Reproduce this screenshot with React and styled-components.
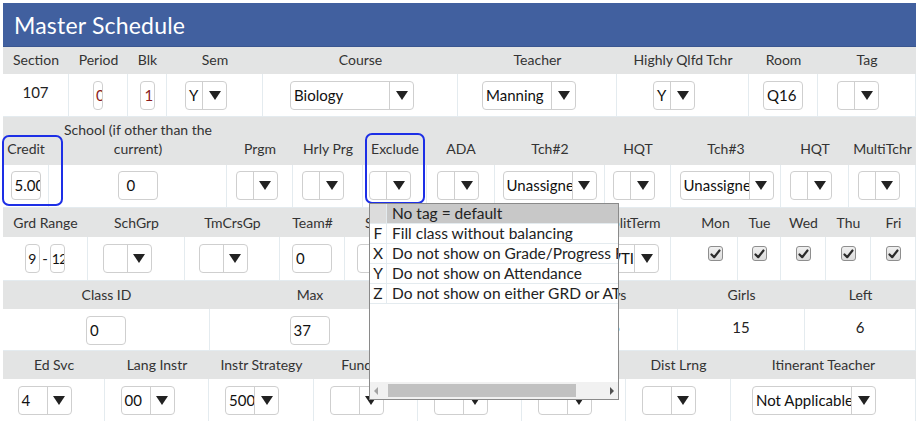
import React from 'react';
import styled, { createGlobalStyle } from 'styled-components';

const GlobalStyle = createGlobalStyle`
  body {
    margin: 0;
    background: #fff;
    font-family: Lato, "Noto Sans", sans-serif;
    color: #222;
  }
`;

const Page = styled.div`
  position: relative;
  width: 918px;
  height: 421px;
  overflow: hidden;
  box-sizing: border-box;
  padding: 3px 2px 0 3px;
`;

const Header = styled.div`
  height: 44px;
  background: #41609f;
  color: #fff;
  font-size: 23px;
  letter-spacing: 0.2px;
  line-height: 44px;
  padding-left: 11px;
  box-shadow: inset 0 -1px 0 #3a5690;
`;

const Block = styled.div`
  display: grid;
  grid-template-columns: ${p => p.cols};
  grid-template-rows: ${p => p.labelH}px ${p => p.valueH}px;
`;

const Label = styled.div`
  background: #e3e4e4;
  color: #333;
  font-size: 14px;
  line-height: 19px;
  text-align: center;
  white-space: nowrap;
  display: flex;
  align-items: flex-end;
  justify-content: center;
  padding-bottom: ${p => p.pb ?? 5}px;
  padding-left: ${p => p.pl ?? 0}px;
  padding-right: ${p => p.pr ?? 0}px;
  box-sizing: border-box;
`;

const Cell = styled.div`
  background: #fff;
  border-right: 1px solid #e4ebef;
  border-bottom: 1px solid #e4ebef;
  display: flex;
  justify-content: center;
  align-items: flex-start;
  gap: 3px;
  padding-top: ${p => p.pt ?? 7}px;
  padding-right: ${p => p.pr ?? 0}px;
  padding-left: ${p => p.pl ?? 0}px;
  box-sizing: border-box;
  &:first-child { border-left: 1px solid #e4ebef; }
`;

const Plain = styled.div`
  font-size: 15px;
  color: #222;
  padding-top: 2px;
`;

const Input = styled.div`
  width: ${p => p.w}px;
  height: 29px;
  box-sizing: border-box;
  border: 1px solid #cfcfcf;
  border-radius: 4px;
  background: #fff;
  font-size: ${p => (p.tight ? 14 : 15)}px;
  letter-spacing: ${p => (p.tight ? '-0.6px' : 'normal')};
  line-height: 27px;
  padding-left: ${p => p.pl ?? 3}px;
  color: ${p => (p.red ? '#8a1c1c' : '#111')};
  overflow: hidden;
  white-space: nowrap;
`;

const Dash = styled.span`
  font-size: 15px;
  line-height: 29px;
  margin: 0 -1px;
`;

const SelectBox = styled.div`
  display: flex;
  height: 29px;
  box-sizing: border-box;
  border: 1px solid #cfcfcf;
  border-radius: 4px;
  background: #fff;
`;

const SelectValue = styled.div`
  width: ${p => p.w}px;
  font-size: 15px;
  line-height: 27px;
  padding-left: 3px;
  box-sizing: border-box;
  overflow: hidden;
  white-space: nowrap;
  color: #111;
  display: flex;
  justify-content: ${p => (p.end ? 'flex-end' : 'flex-start')};
  border-right: 1px solid #cfcfcf;
`;

const Arrow = styled.div`
  width: 23px;
  display: flex;
  align-items: center;
  justify-content: center;
  &::after {
    content: '';
    border-left: 6px solid transparent;
    border-right: 6px solid transparent;
    border-top: 9px solid #222;
  }
`;

const Check = styled.div`
  width: 15px;
  height: 15px;
  box-sizing: border-box;
  border: 1px solid #8e8e8e;
  border-radius: 3px;
  background: linear-gradient(#f0f0f0, #dcdcdc);
  display: flex;
  align-items: center;
  justify-content: center;
`;

const Outline = styled.div`
  position: absolute;
  left: ${p => p.x}px;
  top: ${p => p.y}px;
  width: ${p => p.w}px;
  height: ${p => p.h}px;
  box-sizing: border-box;
  border: 2px solid #1d2fe6;
  border-radius: 7px;
  pointer-events: none;
`;

const Dropdown = styled.div`
  position: absolute;
  left: 369px;
  top: 203px;
  width: 250px;
  height: 197px;
  box-sizing: border-box;
  border: 1px solid #8a8a8a;
  background: #fff;
  display: flex;
  flex-direction: column;
`;

const Option = styled.div`
  display: grid;
  grid-template-columns: 17px 1fr;
  height: 20px;
  font-size: 15.5px;
  line-height: 19px;
  color: #222;
  border-bottom: 1px solid #e4ebef;
  box-sizing: border-box;
`;

const Code = styled.div`
  text-align: center;
  border-right: 1px solid #e4ebef;
  background: ${p => (p.active ? '#dcdcdc' : '#fff')};
`;

const Desc = styled.div`
  padding-left: 5px;
  white-space: nowrap;
  overflow: hidden;
  background: ${p => (p.active ? '#c8c8c8' : '#fff')};
`;

const Spacer = styled.div`
  flex: 1;
`;

const ScrollBar = styled.div`
  height: 17px;
  background: #f1f1f1;
  display: flex;
  align-items: center;
  padding: 0 4px;
`;

const ScrollArrow = styled.div`
  width: 0;
  height: 0;
  border-top: 4px solid transparent;
  border-bottom: 4px solid transparent;
  ${p => (p.right
    ? 'border-left: 4px solid #505050; margin-left: auto;'
    : 'border-right: 4px solid #a3a3a3;')}
`;

const Thumb = styled.div`
  width: 188px;
  height: 13px;
  background: #c1c1c1;
  margin-left: 10px;
`;

function Select({ value = '', w = 17, end }) {
  return (
    <SelectBox>
      <SelectValue w={w} end={end}>{value}</SelectValue>
      <Arrow />
    </SelectBox>
  );
}

function CheckMark() {
  return (
    <Check>
      <svg width="11" height="10" viewBox="0 0 11 10">
        <path d="M1.5 5.5 L4.2 8.2 L9.5 1.5" fill="none" stroke="#2b2b2b" strokeWidth="2.2" strokeLinecap="round" strokeLinejoin="round" />
      </svg>
    </Check>
  );
}

const tags = [
  ['', 'No tag = default'],
  ['F', 'Fill class without balancing'],
  ['X', 'Do not show on Grade/Progress Reports'],
  ['Y', 'Do not show on Attendance'],
  ['Z', 'Do not show on either GRD or ATT'],
];

export default function App() {
  return (
    <>
      <GlobalStyle />
      <Page>
        <Header>Master Schedule</Header>

        <Block cols="66px 59px 39px 96px 195px 159px 132px 69px 98px" labelH={27} valueH={43}>
          <Label>Section</Label>
          <Label>Period</Label>
          <Label>Blk</Label>
          <Label>Sem</Label>
          <Label>Course</Label>
          <Label>Teacher</Label>
          <Label>Highly Qlfd Tchr</Label>
          <Label>Room</Label>
          <Label>Tag</Label>
          <Cell><Plain>107</Plain></Cell>
          <Cell><Input w={10} pl={2} red>0</Input></Cell>
          <Cell><Input w={15} pl={4} red>1</Input></Cell>
          <Cell pr={17}><Select value="Y" /></Cell>
          <Cell pr={16}><Select value="Biology" w={99} /></Cell>
          <Cell pr={16}><Select value="Manning" w={69} /></Cell>
          <Cell pr={17}><Select value="Y" /></Cell>
          <Cell><Input w={40}>Q16</Input></Cell>
          <Cell pr={17}><Select /></Cell>
        </Block>

        <Block cols="46px 178px 66px 70px 64px 68px 110px 66px 110px 68px 67px" labelH={48} valueH={43}>
          <Label pb={7}>Credit</Label>
          <Label pb={7}>School (if other than the<br />current)</Label>
          <Label pb={7}>Prgm</Label>
          <Label pb={7}>Hrly Prg</Label>
          <Label pb={7}>Exclude</Label>
          <Label pb={7}>ADA</Label>
          <Label pb={7}>Tch#2</Label>
          <Label pb={7}>HQT</Label>
          <Label pb={7}>Tch#3</Label>
          <Label pb={7}>HQT</Label>
          <Label pb={7}>MultiTchr</Label>
          <Cell pt={6}><Input w={30} pl={3}>5.00</Input></Cell>
          <Cell pt={6}><Input w={40} pl={8}>0</Input></Cell>
          <Cell pt={6} pr={6}><Select /></Cell>
          <Cell pt={6} pr={9}><Select /></Cell>
          <Cell pt={6} pr={9}><Select /></Cell>
          <Cell pt={6} pr={5}><Select /></Cell>
          <Cell pt={6}><Select value="Unassigned" w={69} /></Cell>
          <Cell pt={6} pr={7}><Select /></Cell>
          <Cell pt={6} pl={2}><Select value="Unassigned" w={69} /></Cell>
          <Cell pt={6} pr={7}><Select /></Cell>
          <Cell pt={6} pr={7}><Select /></Cell>
        </Block>

        <Block cols="85px 97px 95px 65px 65px 90px 88px 83px 67px 43px 45px 45px 45px" labelH={29} valueH={44}>
          <Label>Grd Range</Label>
          <Label>SchGrp</Label>
          <Label>TmCrsGp</Label>
          <Label>Team#</Label>
          <Label pl={8}>Seats</Label>
          <Label>Section Type</Label>
          <Label>Sub Term</Label>
          <Label pl={6}>SplitTerm</Label>
          <Label pl={22}>Mon</Label>
          <Label>Tue</Label>
          <Label>Wed</Label>
          <Label>Thu</Label>
          <Label>Fri</Label>
          <Cell><Input w={15} pl={2} tight>9</Input><Dash>-</Dash><Input w={15} pl={1} tight>12</Input></Cell>
          <Cell pr={18}><Select w={24} /></Cell>
          <Cell pr={18}><Select w={24} /></Cell>
          <Cell><Input w={40}>0</Input></Cell>
          <Cell><Input w={40} /></Cell>
          <Cell pr={18}><Select /></Cell>
          <Cell pr={18}><Select /></Cell>
          <Cell pl={16}><Select value="WTI" w={19} end /></Cell>
          <Cell pt={9} pl={22}><CheckMark /></Cell>
          <Cell pt={9}><CheckMark /></Cell>
          <Cell pt={9}><CheckMark /></Cell>
          <Cell pt={9}><CheckMark /></Cell>
          <Cell pt={9}><CheckMark /></Cell>
        </Block>

        <Block cols="207px 200px 135px 133px 127px 111px" labelH={28} valueH={42}>
          <Label>Class ID</Label>
          <Label>Max</Label>
          <Label>Total</Label>
          <Label>Boys</Label>
          <Label>Girls</Label>
          <Label>Left</Label>
          <Cell><Input w={40}>0</Input></Cell>
          <Cell><Input w={40}>37</Input></Cell>
          <Cell><Plain>31</Plain></Cell>
          <Cell><Plain>16</Plain></Cell>
          <Cell><Plain>15</Plain></Cell>
          <Cell><Plain>6</Plain></Cell>
        </Block>

        <Block cols="102px 104px 105px 104px 104px 104px 105px 185px" labelH={28} valueH={45}>
          <Label>Ed Svc</Label>
          <Label>Lang Instr</Label>
          <Label>Instr Strategy</Label>
          <Label>Funding</Label>
          <Label>Prgm Type</Label>
          <Label>Cmptr Lab</Label>
          <Label>Dist Lrng</Label>
          <Label>Itinerant Teacher</Label>
          <Cell pr={18}><Select value="4" w={29} /></Cell>
          <Cell pr={18}><Select value="00" w={29} /></Cell>
          <Cell pr={18}><Select value="500" w={29} /></Cell>
          <Cell pr={18}><Select w={29} /></Cell>
          <Cell pr={18}><Select w={29} /></Cell>
          <Cell pr={18}><Select w={29} /></Cell>
          <Cell pr={19}><Select w={29} /></Cell>
          <Cell pr={18}><Select value="Not Applicable" w={99} /></Cell>
        </Block>

        <Outline x={2} y={135} w={61} h={71} />
        <Outline x={365} y={133} w={60} h={71} />

        <Dropdown>
          {tags.map(([code, text], i) => (
            <Option key={text}>
              <Code active={i === 0}>{code}</Code>
              <Desc active={i === 0}>{text}</Desc>
            </Option>
          ))}
          <Spacer />
          <ScrollBar>
            <ScrollArrow />
            <Thumb />
            <ScrollArrow right />
          </ScrollBar>
        </Dropdown>
      </Page>
    </>
  );
}
